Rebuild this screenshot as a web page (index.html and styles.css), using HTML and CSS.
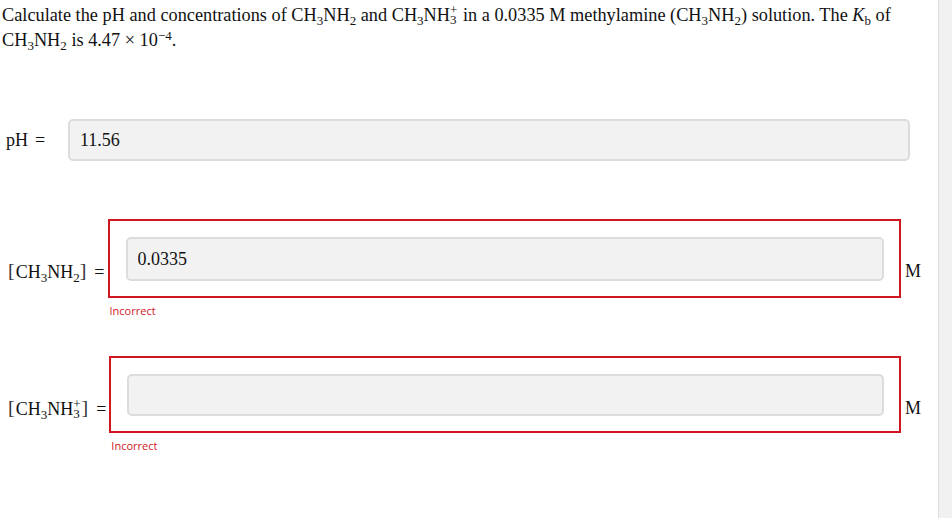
FILE: index.html
```html
<!DOCTYPE html>
<html>
<head>
<meta charset="utf-8">
<link rel="stylesheet" href="styles.css">
</head>
<body>
<div class="page">
  <main class="content">
    <p class="q">Calculate the pH and concentrations of CH<sub>3</sub>NH<sub>2</sub> and CH<sub>3</sub>NH<span class="ss"><span class="sup">+</span><span class="sb">3</span></span> in a 0.0335 M methylamine (CH<sub>3</sub>NH<sub>2</sub>) solution. The <i>K</i><sub>b</sub> of<br>CH<sub>3</sub>NH<sub>2</sub> is 4.47 × 10<sup>−4</sup>.</p>

    <div class="row row-ph">
      <span class="label label-ph">pH<span class="eq-ph">=</span></span>
      <input class="field field-ph" type="text" value="11.56" readonly>
    </div>

    <div class="row row-ans row-first">
      <span class="label label-ans"><span class="br">[</span>CH<sub>3</sub>NH<sub>2</sub><span class="br">]</span><span class="eq">=</span></span>
      <div class="ans">
        <div class="box"><input class="field" type="text" value="0.0335" readonly></div>
        <div class="incorrect">Incorrect</div>
      </div>
      <span class="unit">M</span>
    </div>

    <div class="row row-ans row-second">
      <span class="label label-ans"><span class="br">[</span>CH<sub>3</sub>NH<span class="ss"><span class="sup">+</span><span class="sb">3</span></span><span class="br">]</span><span class="eq">=</span></span>
      <div class="ans">
        <div class="box"><input class="field" type="text" value="" readonly></div>
        <div class="incorrect">Incorrect</div>
      </div>
      <span class="unit">M</span>
    </div>
  </main>
  <div class="scrollbar"></div>
</div>
</body>
</html>
```
FILE: styles.css
```css
html, body {
  margin: 0;
  padding: 0;
  background: #fff;
}
body {
  font-family: "Liberation Serif", "Times New Roman", serif;
  font-size: 18px;
  color: #111;
}
.page {
  display: flex;
  width: 952px;
  height: 518px;
  overflow: hidden;
}
.content {
  flex: 1;
  min-width: 0;
}
.scrollbar {
  width: 13px;
  background: #f1f1f1;
  border-left: 1px solid #dedede;
}
.q {
  margin: 0;
  padding: 3px 0 0 2px;
  line-height: 25px;
  font-size: 18.3px;
}
sub {
  font-size: 13px;
  vertical-align: -4px;
  line-height: 0;
}
sup {
  font-size: 13px;
  vertical-align: 6px;
  line-height: 0;
}
.ss {
  display: inline-flex;
  flex-direction: column;
  font-size: 13px;
  line-height: 10px;
  vertical-align: 7px;
  margin-right: 1px;
}
.ss .sup { line-height: 10px; }
.ss .sb { line-height: 10px; }
.row {
  display: flex;
}
.row-ph {
  margin-top: 66px;
  align-items: center;
  padding-right: 28px;
}
.label {
  line-height: 25px;
  white-space: nowrap;
}
.label-ph {
  width: 68px;
  padding-left: 6px;
  box-sizing: border-box;
}
.eq-ph {
  margin-left: 7px;
}
.field {
  flex: 1;
  min-width: 0;
  height: 42px;
  box-sizing: border-box;
  border: 2px solid #dcdcdc;
  border-radius: 5px;
  background: #f2f2f2;
  font-family: "Liberation Serif", "Times New Roman", serif;
  font-size: 18px;
  color: #111;
  padding: 0 10px;
  outline: none;
}
.field-ph {
  display: block;
}
.row-ans {
  align-items: flex-start;
}
.row-first { margin-top: 58px; }
.row-second { margin-top: 38px; }
.label-ans {
  padding-left: 8px;
  margin-top: 40px;
}
.br {
  font-size: 20px;
  font-weight: 300;
  display: inline-block;
  transform: scaleY(0.9);
  color: #333;
}
.br:first-of-type { margin-right: 1px; }
.eq {
  margin-left: 8px;
  margin-right: 3px;
}
.ans {
  flex: 1;
  min-width: 0;
  display: flex;
  flex-direction: column;
}
.box {
  display: flex;
  border: 2px solid #d0161f;
  padding: 16px 15px 15px 16px;
}
.box .field {
  height: 44px;
}
.row-second .box .field { height: 42px; }
.incorrect {
  font-family: "Open Sans", "Liberation Sans", sans-serif;
  font-size: 11px;
  line-height: 15px;
  color: #d0161f;
  margin-top: 5px;
  padding-left: 2px;
}
.unit {
  line-height: 25px;
  margin-top: 40px;
  margin-left: 4px;
  width: 33px;
}
```
